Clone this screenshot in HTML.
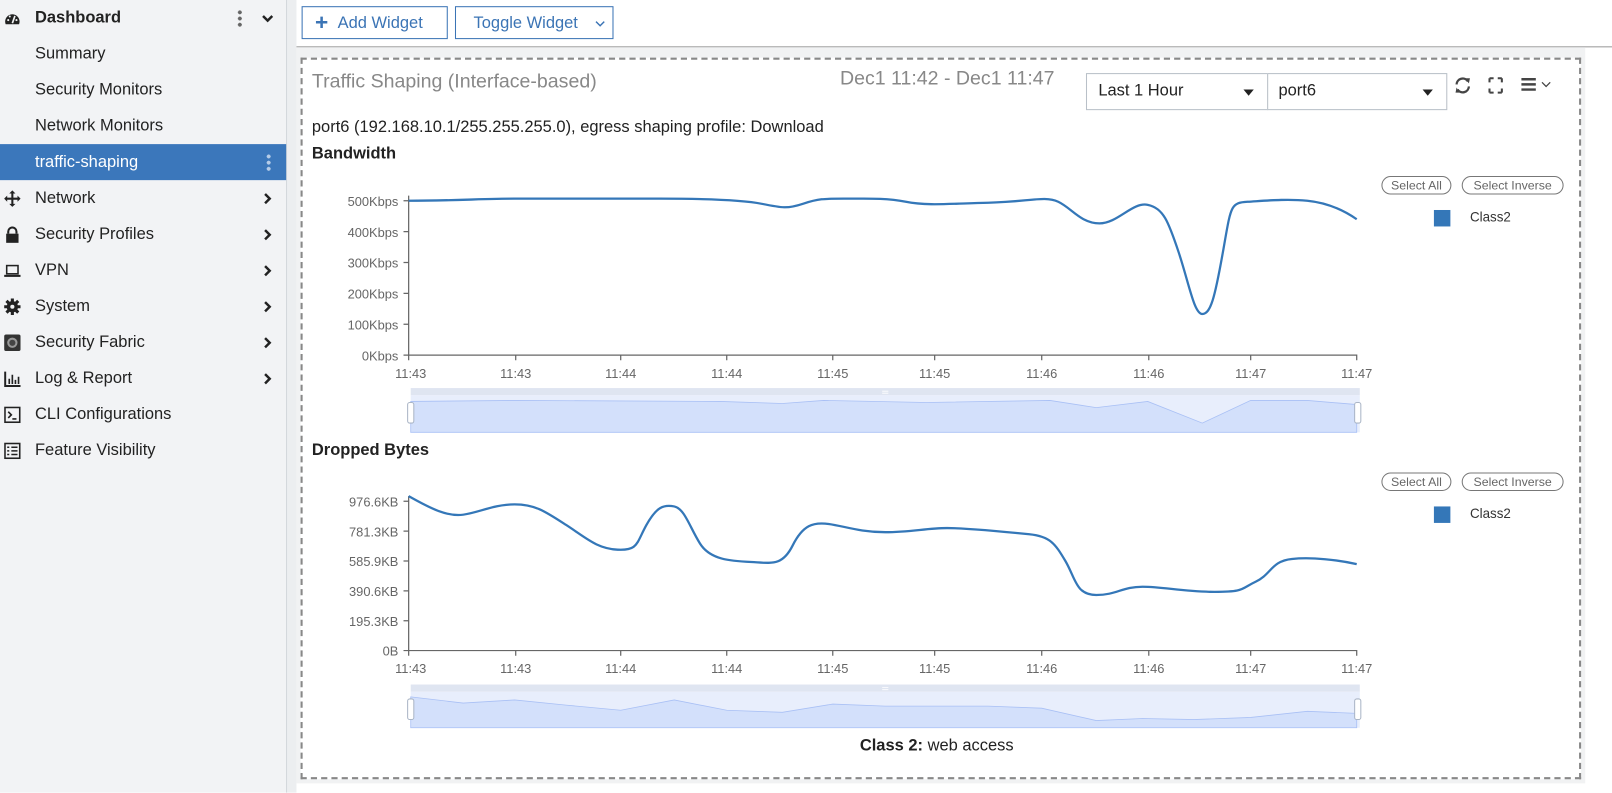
<!DOCTYPE html>
<html><head><meta charset="utf-8"><style>
html,body{margin:0;padding:0;width:1612px;height:792px;overflow:hidden;background:#fff;font-family:"Liberation Sans",sans-serif;}
#w{position:absolute;left:0;top:0;width:1566px;height:770px;transform:scale(1.02937);transform-origin:0 0;}
.sb{position:absolute;left:0;top:0;width:278px;height:770px;background:#f2f3f5;border-right:1px solid #cfd3d8;}
.row{position:absolute;left:0;width:278px;height:35px;line-height:35px;font-size:16px;color:#222;}
.row .t{position:absolute;left:34px;}
.row .ic{position:absolute;left:4px;top:10px;width:16px;height:16px;}
.row .ch{position:absolute;left:254px;top:12px;width:12px;height:12px;}
.sel{background:#3b77bb;color:#fff;}
.abs{position:absolute;}
.btn{position:absolute;top:6px;height:32px;border:1px solid #3b74b5;color:#3b74b5;font-size:16px;line-height:31px;box-sizing:border-box;}
.sel2{position:absolute;top:71px;height:36px;border:1px solid #b9c0c8;box-sizing:border-box;font-size:16px;line-height:34px;color:#222;background:#fff;}
.pill{position:absolute;height:18px;border:1px solid #777;border-radius:9px;font-size:12px;line-height:17px;color:#666;box-sizing:border-box;text-align:center;}
</style></head><body><div id="w">
<svg width="0" height="0" style="position:absolute"><defs><symbol id="chr" viewBox="0 0 12 12"><path d="M3.5 1.5L8 6L3.5 10.5" stroke="#222" stroke-width="2.4" fill="none"/></symbol></defs></svg>
<div class="sb">
 <div class="row" style="top:0;font-weight:bold"><svg class="ic" viewBox="0 0 16 16"><path d="M1.5 13.5A7 7 0 1 1 14.5 13.5Z" fill="#222"/><path d="M8 12.5L10.5 5.5" stroke="#f2f3f5" stroke-width="1.6"/><circle cx="4" cy="9.5" r="1" fill="#f2f3f5"/><circle cx="5.5" cy="6" r="1" fill="#f2f3f5"/><circle cx="12" cy="9.5" r="1" fill="#f2f3f5"/></svg><span class="t">Dashboard</span><span class="abs" style="left:231px;top:9px;width:4px;height:18px;background:radial-gradient(circle,#666 1.8px,transparent 2px) 0 0/4px 6px repeat-y"></span><svg class="ch" viewBox="0 0 12 12"><path d="M1.5 3.5L6 8L10.5 3.5" stroke="#222" stroke-width="2.4" fill="none"/></svg></div>
 <div class="row" style="top:35px"><span class="t">Summary</span></div>
 <div class="row" style="top:70px"><span class="t">Security Monitors</span></div>
 <div class="row" style="top:105px"><span class="t">Network Monitors</span></div>
 <div class="row sel" style="top:140px"><span class="t">traffic-shaping</span><span class="abs" style="left:259px;top:9px;width:4px;height:18px;background:radial-gradient(circle,#b7cde8 1.8px,transparent 2px) 0 0/4px 6px repeat-y"></span></div>
 <div class="row" style="top:175px"><svg class="ic" viewBox="0 0 16 16"><path d="M8 0L11 3H9V7H13V5L16 8L13 11V9H9V13H11L8 16L5 13H7V9H3V11L0 8L3 5V7H7V3H5Z" fill="#222"/></svg><span class="t">Network</span><svg class="ch"><use href="#chr"/></svg></div>
 <div class="row" style="top:210px"><svg class="ic" viewBox="0 0 16 16"><path d="M4 7V5A4 4 0 0 1 12 5V7" stroke="#222" stroke-width="2" fill="none"/><rect x="2" y="7" width="12" height="9" fill="#222"/></svg><span class="t">Security Profiles</span><svg class="ch"><use href="#chr"/></svg></div>
 <div class="row" style="top:245px"><svg class="ic" viewBox="0 0 16 16"><rect x="2.5" y="3" width="11" height="8" fill="none" stroke="#222" stroke-width="1.5"/><rect x="0" y="12" width="16" height="2" fill="#222"/></svg><span class="t">VPN</span><svg class="ch"><use href="#chr"/></svg></div>
 <div class="row" style="top:280px"><svg class="ic" viewBox="0 0 16 16"><circle cx="8" cy="8" r="5.5" fill="#222"/><g stroke="#222" stroke-width="3"><path d="M8 0V16M0 8H16M2.3 2.3L13.7 13.7M13.7 2.3L2.3 13.7"/></g><circle cx="8" cy="8" r="2" fill="#f2f3f5"/></svg><span class="t">System</span><svg class="ch"><use href="#chr"/></svg></div>
 <div class="row" style="top:315px"><svg class="ic" viewBox="0 0 16 16"><rect x="0" y="0" width="16" height="16" rx="2" fill="#333"/><circle cx="8" cy="8" r="5" fill="#999"/><circle cx="8" cy="8" r="3" fill="#444"/></svg><span class="t">Security Fabric</span><svg class="ch"><use href="#chr"/></svg></div>
 <div class="row" style="top:350px"><svg class="ic" viewBox="0 0 16 16"><path d="M1 1V15H16" stroke="#222" stroke-width="2" fill="none"/><path d="M5 13V8M8 13V4M11 13V9M14 13V6" stroke="#222" stroke-width="1.6"/></svg><span class="t">Log &amp; Report</span><svg class="ch"><use href="#chr"/></svg></div>
 <div class="row" style="top:385px"><svg class="ic" viewBox="0 0 16 16"><rect x="0.8" y="0.8" width="14.4" height="14.4" fill="none" stroke="#222" stroke-width="1.6"/><path d="M4 5L7 8L4 11M8 12H12" stroke="#222" stroke-width="1.6" fill="none"/></svg><span class="t">CLI Configurations</span></div>
 <div class="row" style="top:420px"><svg class="ic" viewBox="0 0 16 16"><rect x="0.8" y="0.8" width="14.4" height="14.4" fill="none" stroke="#222" stroke-width="1.6"/><path d="M3 4.5H5M7 4.5H13M3 8H5M7 8H13M3 11.5H5M7 11.5H13" stroke="#222" stroke-width="1.5"/></svg><span class="t">Feature Visibility</span></div>
</div>
<div class="abs" style="left:279px;top:0;width:9px;height:770px;background:#eceef0"></div>
<div class="btn" style="left:293px;width:142px;"><span style="position:absolute;left:12px;font-size:22px;font-weight:bold;top:-1px">+</span><span style="position:absolute;left:34px">Add Widget</span></div>
<div class="btn" style="left:442px;width:154px;"><span style="position:absolute;left:17px">Toggle Widget</span><svg style="position:absolute;left:135px;top:13px" width="10" height="7" viewBox="0 0 10 7"><path d="M1 1L5 5L9 1" stroke="#3b74b5" stroke-width="1.4" fill="none"/></svg></div>
<div class="abs" style="left:288px;top:45px;width:1278px;height:1px;background:#999"></div>
<div class="abs" style="left:288px;top:46px;width:1252px;height:715px;background:#f1f2f3"></div>
<div class="abs" style="left:292px;top:56px;width:1244px;height:701px;background:#fff;border:2px dashed #888;box-sizing:border-box"></div>
<div class="abs" style="left:303px;top:69px;font-size:19px;color:#888">Traffic Shaping (Interface-based)</div>
<div class="abs" style="left:816px;top:66px;font-size:19px;color:#888">Dec1 11:42 - Dec1 11:47</div>
<div class="sel2" style="left:1055px;width:177px"><span style="margin-left:11px">Last 1 Hour</span><span style="position:absolute;left:152px;top:15px;border:5px solid transparent;border-top:6px solid #222;width:0;height:0"></span></div>
<div class="sel2" style="left:1231px;width:175px"><span style="margin-left:10px">port6</span><span style="position:absolute;left:150px;top:15px;border:5px solid transparent;border-top:6px solid #222;width:0;height:0"></span></div>
<svg class="abs" style="left:1412px;top:73px" width="110" height="20" viewBox="0 0 110 20"><path d="M3 9A6 6 0 0 1 14 6M15 11A6 6 0 0 1 4 14" stroke="#444" stroke-width="2.2" fill="none"/><path d="M11 3L16 3L15 8Z M6 17L2 17L3 12Z" fill="#444"/><path d="M35 3H39M35 3V7M47 3H43M47 3V7M35 17H39M35 17V13M47 17H43M47 17V13" stroke="#444" stroke-width="2"/><path d="M66 4H80M66 9H80M66 14H80" stroke="#444" stroke-width="2.4"/><path d="M86 7L90 11L94 7" stroke="#444" stroke-width="1.2" fill="none"/></svg>
<div class="abs" style="left:303px;top:115px;font-size:16px;color:#222">port6 (192.168.10.1/255.255.255.0), egress shaping profile: Download</div>
<div class="abs" style="left:303px;top:141px;font-size:16px;color:#222;font-weight:bold">Bandwidth</div>
<div class="abs" style="left:303px;top:429px;font-size:16px;color:#222;font-weight:bold">Dropped Bytes</div>
<div class="abs" style="left:0;width:1820px;top:716px;text-align:center;font-size:16px;color:#222"><b>Class 2:</b> web access</div>

<div class="pill" style="left:1342px;top:171px;width:68px">Select All</div>
<div class="pill" style="left:1420px;top:171px;width:99px">Select Inverse</div>
<div class="abs" style="left:1393px;top:204px;width:16px;height:16px;background:#3477b8"></div>
<div class="abs" style="left:1428px;top:203px;font-size:13px;color:#333">Class2</div>
<div class="pill" style="left:1342px;top:459px;width:68px">Select All</div>
<div class="pill" style="left:1420px;top:459px;width:99px">Select Inverse</div>
<div class="abs" style="left:1393px;top:492px;width:16px;height:16px;background:#3477b8"></div>
<div class="abs" style="left:1428px;top:491px;font-size:13px;color:#333">Class2</div>

<svg class="abs" style="left:0;top:0" width="1566" height="770" viewBox="0 0 1566 770" font-family="Liberation Sans, sans-serif" font-size="12.5" fill="#666">
<g stroke="#666" stroke-width="1.2" fill="none">
<path d="M397 190V345H1318V350M392 195H397M392 225H397M392 255H397M392 285H397M392 315H397M392 345H397"/>
<path d="M397 345V350M501 345V350M603 345V350M706 345V350M809 345V350M908 345V350M1012 345V350M1116 345V350M1215 345V350"/>
<path d="M397 482V632H1318V637M392 487H397M392 516H397M392 545H397M392 574H397M392 603H397M392 632H397"/>
<path d="M397 632V637M501 632V637M603 632V637M706 632V637M809 632V637M908 632V637M1012 632V637M1116 632V637M1215 632V637"/>
</g>
<g text-anchor="end">
<text x="387" y="200">500Kbps</text><text x="387" y="230">400Kbps</text><text x="387" y="260">300Kbps</text><text x="387" y="290">200Kbps</text><text x="387" y="320">100Kbps</text><text x="387" y="350">0Kbps</text>
<text x="387" y="492">976.6KB</text><text x="387" y="521">781.3KB</text><text x="387" y="550">585.9KB</text><text x="387" y="579">390.6KB</text><text x="387" y="608">195.3KB</text><text x="387" y="637">0B</text>
</g>
<g text-anchor="middle">
<text x="399" y="367">11:43</text><text x="501" y="367">11:43</text><text x="603" y="367">11:44</text><text x="706" y="367">11:44</text><text x="809" y="367">11:45</text><text x="908" y="367">11:45</text><text x="1012" y="367">11:46</text><text x="1116" y="367">11:46</text><text x="1215" y="367">11:47</text><text x="1318" y="367">11:47</text>
<text x="399" y="654">11:43</text><text x="501" y="654">11:43</text><text x="603" y="654">11:44</text><text x="706" y="654">11:44</text><text x="809" y="654">11:45</text><text x="908" y="654">11:45</text><text x="1012" y="654">11:46</text><text x="1116" y="654">11:46</text><text x="1215" y="654">11:47</text><text x="1318" y="654">11:47</text>
</g>
<path d="M397 195C440 195 470 193 500 193S600 193 640 193S720 194 740 198S765 203 780 198S800 193 820 193S860 192 880 196S920 198 960 197S1015 190 1028 196S1050 217 1068 217S1100 196 1115 199S1135 215 1145 245S1160 305 1168 305S1180 290 1188 245S1195 197 1212 196S1250 193 1270 195S1305 204 1318 213" stroke="#3477b8" stroke-width="2.2" fill="none"/>
<path d="M397 482C420 495 435 502 450 500S480 490 500 490S530 497 550 510S580 533 600 534S618 528 628 510S645 490 655 492S670 512 680 528S710 545 730 546S760 550 770 530S790 507 805 509S835 517 860 517S900 513 920 513S980 517 1000 519S1025 528 1035 545S1045 578 1065 578S1090 570 1110 570S1150 575 1180 575S1205 572 1220 565S1235 545 1255 543S1300 544 1318 548" stroke="#3477b8" stroke-width="2.2" fill="none"/>
<rect x="399" y="377" width="922" height="7" fill="#dfe5f1"/>
<rect x="399" y="384" width="922" height="36" fill="#e8eefc"/>
<path d="M399 390L500 389L700 390L760 392L800 389L900 391L1020 389L1065 396L1115 390L1168 411L1215 389L1270 389L1318 393V420H399Z" fill="#d3e0fb" stroke="#a9c0f5" stroke-width="0.8"/>
<rect x="399" y="665" width="922" height="7" fill="#dfe5f1"/>
<rect x="399" y="672" width="922" height="35" fill="#e8eefc"/>
<path d="M399 677L450 683L500 680L550 685L603 690L655 680L706 690L760 692L809 684L860 686L960 686L1012 688L1065 700L1110 698L1160 699L1215 697L1270 691L1318 693V707H399Z" fill="#d3e0fb" stroke="#a9c0f5" stroke-width="0.8"/>
<g fill="#fff" stroke="#aab5c6"><rect x="396" y="391" width="6" height="20" rx="2"/><rect x="1316" y="391" width="6" height="20" rx="2"/><rect x="396" y="679" width="6" height="20" rx="2"/><rect x="1316" y="679" width="6" height="20" rx="2"/></g>
<path d="M857 380H863M857 382H863M857 668H863M857 670H863" stroke="#fff" stroke-width="0.8"/>
</svg>
</div></body></html>
